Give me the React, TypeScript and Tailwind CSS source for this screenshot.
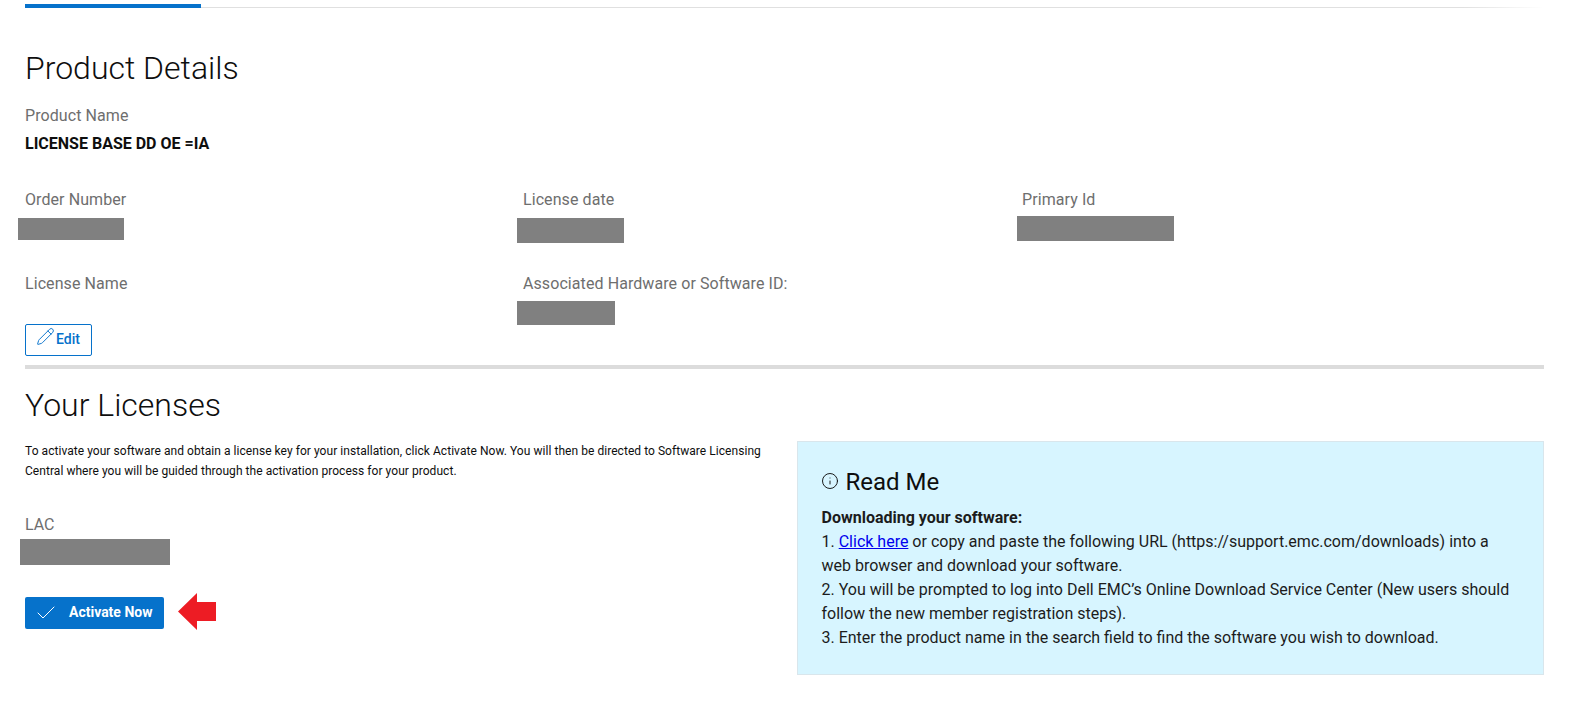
import React from 'react';
import { Check, Info, Pencil } from 'lucide-react';

const Field = ({ label, block }: { label: string; block?: string }) => (
  <div>
    <div className="text-base leading-6 tracking-[0.08px] text-[#6e6e6e]">{label}</div>
    {block && <div className={block} />}
  </div>
);

export default function App() {
  return (
    <div className="min-h-[701px] bg-white text-[#0e0e0e] font-['Roboto',sans-serif] overflow-hidden">
      <div className="ml-[25px] mr-[31px] pt-1">
        {/* Tab strip */}
        <div className="h-1 flex items-end">
          <div className="h-1 w-[176px] bg-[#0672cb]" />
          <div className="h-px flex-1 bg-[linear-gradient(to_right,#e0e0e0_0%,#e0e0e0_94%,transparent_100%)]" />
        </div>

        <h1 className="mt-[36px] text-[32px] leading-[48px] font-light">Product Details</h1>

        <div className="mt-[12px] text-base leading-6 tracking-[0.08px] text-[#6e6e6e]">Product Name</div>
        <div className="mt-[4px] text-base leading-6 font-bold">LICENSE BASE DD OE =IA</div>

        <div className="mt-[32px] grid grid-cols-[498px_499px_1fr] h-[72px]">
          <Field label="Order Number" block="-ml-[7px] mt-[6px] w-[106px] h-[22px] bg-[#808080]" />
          <Field label="License date" block="-ml-[6px] mt-[6px] w-[107px] h-[25px] bg-[#808080]" />
          <Field label="Primary Id" block="-ml-[5px] mt-[4px] w-[157px] h-[25px] bg-[#808080]" />
        </div>

        <div className="mt-[12px] grid grid-cols-[498px_499px_1fr]">
          <div>
            <Field label="License Name" />
            <button className="mt-[28px] flex items-center h-8 w-[67px] pl-[10px] border border-[#0672cb] rounded-[2px] text-sm font-medium text-[#0672cb]">
              <Pencil size={19} strokeWidth={1.2} className="mr-[1px] -mt-[8px]" />
              <span className="-mt-[2px]">Edit</span>
            </button>
          </div>
          <Field label="Associated Hardware or Software ID:" block="-ml-[6px] mt-[5px] w-[98px] h-[24px] bg-[#808080]" />
          <div />
        </div>

        <div className="mt-[9px] h-1 bg-[#dcdcdc]" />

        <h2 className="mt-[12px] text-[32px] leading-[48px] font-light">Your Licenses</h2>

        <div className="mt-[12px] grid grid-cols-[772px_1fr]">
          <div>
            <p className="w-[745px] text-xs leading-5 tracking-[0.05px]">
              To activate your software and obtain a license key for your installation, click Activate Now. You will then be directed to Software Licensing Central where you will be guided through the activation process for your product.
            </p>
            <div className="mt-[32px] text-base leading-6 text-[#6e6e6e]">LAC</div>
            <div className="-ml-[5px] mt-[2px] w-[150px] h-[26px] bg-[#808080]" />
            <div className="mt-[31px] flex items-center">
              <button className="flex items-center h-8 w-[139px] pl-[9px] rounded-[2px] bg-[#0672cb] text-sm font-bold text-white">
                <Check size={24} strokeWidth={1} className="mr-[11px]" />
                <span className="-mt-[2px]">Activate Now</span>
              </button>
              <svg width="38" height="37" viewBox="0 0 38 37" className="ml-[14px] -mt-[3px]">
                <path d="M0 18.5 L19 0 V9 H38 V28 H19 V37 Z" fill="#ed1c24" />
              </svg>
            </div>
          </div>

          <div className="h-[234px] border border-[#d9e6ec] bg-[#d7f5ff] pl-[23.5px] pt-[22px]">
            <div className="flex items-center">
              <Info size={18} strokeWidth={1.25} className="-ml-[1px] mr-[7px] -mt-[3px]" />
              <span className="text-2xl leading-9 font-normal">Read Me</span>
            </div>
            <div className="mt-[6px] w-[700px] text-base leading-6 text-[#1c1c1c]">
              <div className="font-bold">Downloading your software:</div>
              <div>1. <a href="#" className="text-[#0000ee] underline">Click here</a> or copy and paste the following URL (https://support.emc.com/downloads) into a web browser and download your software.</div>
              <div>2. You will be prompted to log into Dell EMC’s Online Download Service Center (New users should follow the new member registration steps).</div>
              <div>3. Enter the product name in the search field to find the software you wish to download.</div>
            </div>
          </div>
        </div>
      </div>
    </div>
  );
}
